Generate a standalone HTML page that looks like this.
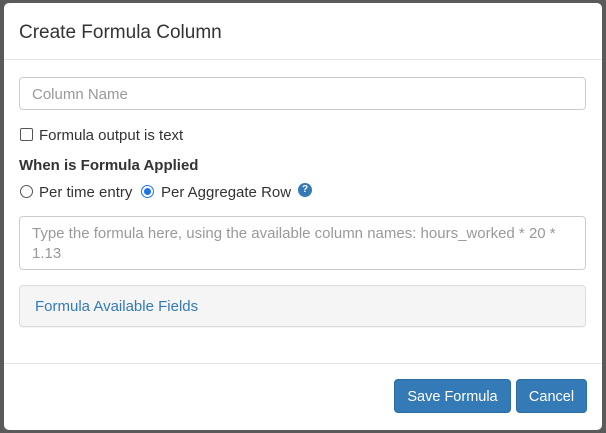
<!DOCTYPE html>
<html><head><style>
*{box-sizing:border-box;margin:0;padding:0}
body{width:606px;height:433px;background:#5a5a5a;font-family:"Liberation Sans",sans-serif;color:#333;position:relative;overflow:hidden}
.m{position:absolute;left:4px;top:3px;width:598px;height:427px;background:#fff;border-radius:5px}
.t{position:absolute;left:15px;top:19px;font-size:19px;color:#333}
.hr{position:absolute;left:0;right:0;height:1px;background:#e5e5e5}
.in{position:absolute;left:15px;width:567px;border:1px solid #ccc;border-radius:4px;color:#999;font-size:15px}
.lbl{position:absolute;font-size:15px;color:#333}
.btn{position:absolute;top:376px;height:34px;background:#337ab7;border:1px solid #2e6da4;border-radius:4px;color:#fff;font-size:14.5px;text-align:center;line-height:34px}
</style></head><body>
<div class="m">
<div class="t">Create Formula Column</div>
<div class="hr" style="top:56px"></div>
<div class="in" style="top:74px;height:33px;padding:8px 12px">Column Name</div>
<div style="position:absolute;left:16px;top:125px;width:13px;height:13px;border:1px solid #555;border-radius:2px"></div>
<div class="lbl" style="left:35px;top:124px">Formula output is text</div>
<div class="lbl" style="left:15px;top:154px;font-weight:bold">When is Formula Applied</div>
<div style="position:absolute;left:16px;top:182px;width:13px;height:13px;border:1px solid #555;border-radius:50%"></div>
<div class="lbl" style="left:35px;top:181px">Per time entry</div>
<div style="position:absolute;left:137px;top:182px;width:13px;height:13px;border:1px solid #1a73e8;border-radius:50%"><div style="margin:2px;width:7px;height:7px;border-radius:50%;background:#1a73e8"></div></div>
<div class="lbl" style="left:157px;top:181px">Per Aggregate Row</div>
<div style="position:absolute;left:294px;top:180px;width:14px;height:14px;border-radius:50%;background:#337ab7;color:#fff;font-size:10px;font-weight:bold;text-align:center;line-height:14px">?</div>
<div class="in" style="top:213px;height:54px;padding:7px 12px;line-height:20px">Type the formula here, using the available column names: hours_worked * 20 * 1.13</div>
<div style="position:absolute;left:15px;top:282px;width:567px;height:42px;background:#f5f5f5;border:1px solid #ddd;border-radius:4px;box-shadow:0 1px 1px rgba(0,0,0,.05);padding:12px 15px;font-size:15px;color:#337ab7">Formula Available Fields</div>
<div class="hr" style="top:360px"></div>
<div class="btn" style="left:390px;width:117px">Save Formula</div>
<div class="btn" style="left:512px;width:71px">Cancel</div>
</div>
</body></html>
